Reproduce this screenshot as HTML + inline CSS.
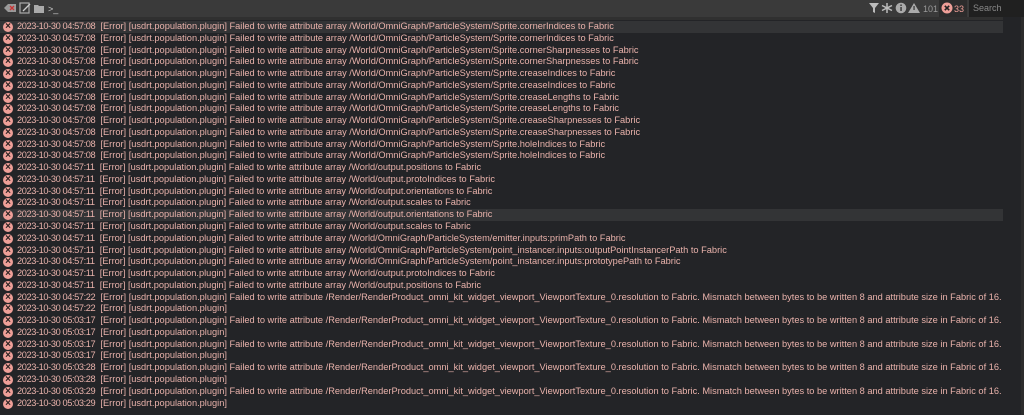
<!DOCTYPE html>
<html><head><style>
*{margin:0;padding:0;box-sizing:border-box}
body{width:1024px;height:415px;background:#232427;overflow:hidden;font-family:"Liberation Sans",sans-serif;position:relative}
#tb{position:absolute;left:0;top:0;width:1024px;height:17px;background:#3a3a3a}
#strip{position:absolute;left:0;top:17px;width:1003px;height:3px;background:#303030}
#rows{position:absolute;left:0;top:21px;width:1003px}
.r{height:11.78px;line-height:11.78px;font-size:9.25px;color:#e9b2ab;white-space:nowrap;position:relative;padding-left:17px}
.r b{font-weight:normal;letter-spacing:-0.4px}
.r.h{background:#333436}
.r::before{content:"×";position:absolute;left:3px;top:1px;width:10px;height:10px;border-radius:50%;background:#ef9f98;color:#2a2020;font-size:10px;line-height:10px;text-align:center;font-weight:bold}
#sb{position:absolute;left:1021px;top:17px;width:3px;height:398px;background:#2c2c2c}
</style></head><body>
<div id="tb">
<svg width="60" height="17" style="position:absolute;left:2px;top:0">
<path d="M2 8l4-4h8v8H6z" fill="#9a9a9a"/><path d="M8 6l4 4M12 6l-4 4" stroke="#c33" stroke-width="1.3"/>
<rect x="18" y="3" width="9" height="10" fill="none" stroke="#aaa" stroke-width="1.2"/><path d="M21 11l7-7" stroke="#ccc" stroke-width="1.3"/>
<path d="M32 5h4l1 1h5v7h-10z" fill="#aaa"/>
<text x="46" y="12" font-size="9" fill="#ccc" font-family="Liberation Sans">&gt;_</text>
</svg>
<svg width="101" height="17" style="position:absolute;left:868px;top:0">
<path d="M1 3h10l-4 5v5l-2-1v-4z" fill="#bbb"/>
<path d="M19 3v10M14 5.5l10 5M14 10.5l10-5" stroke="#bbb" stroke-width="1.5"/>
<circle cx="33" cy="8" r="5.3" fill="#aaa"/><rect x="32.3" y="7" width="1.5" height="4" fill="#3a3a3a"/><rect x="32.3" y="4.5" width="1.5" height="1.5" fill="#3a3a3a"/>
<path d="M46 3l6 10h-12z" fill="#aaa"/><rect x="45.4" y="6" width="1.3" height="4" fill="#3a3a3a"/>
<text x="55" y="12" font-size="9" fill="#999" font-family="Liberation Sans">101</text>
<rect x="71" y="0" width="28" height="17" fill="#2c2c2c"/>
<circle cx="79" cy="8" r="5.5" fill="#ef9f98"/><path d="M76.8 5.8l4.4 4.4M81.2 5.8l-4.4 4.4" stroke="#222" stroke-width="1.6"/>
<text x="86" y="12" font-size="9" fill="#ef9f98" font-family="Liberation Sans">33</text>
</svg>
<div style="position:absolute;left:969px;top:0;width:55px;height:17px;background:#202020;color:#888;font-size:9px;line-height:17px;padding-left:4px">Search</div>
</div>
<div id="strip"></div>
<div id="rows">
<div class="r h"><b>2023-10-30 04:57:08</b>&nbsp; [Error] [usdrt.population.plugin] Failed to write attribute array /World/OmniGraph/ParticleSystem/Sprite.cornerIndices to Fabric</div>
<div class="r"><b>2023-10-30 04:57:08</b>&nbsp; [Error] [usdrt.population.plugin] Failed to write attribute array /World/OmniGraph/ParticleSystem/Sprite.cornerIndices to Fabric</div>
<div class="r"><b>2023-10-30 04:57:08</b>&nbsp; [Error] [usdrt.population.plugin] Failed to write attribute array /World/OmniGraph/ParticleSystem/Sprite.cornerSharpnesses to Fabric</div>
<div class="r"><b>2023-10-30 04:57:08</b>&nbsp; [Error] [usdrt.population.plugin] Failed to write attribute array /World/OmniGraph/ParticleSystem/Sprite.cornerSharpnesses to Fabric</div>
<div class="r"><b>2023-10-30 04:57:08</b>&nbsp; [Error] [usdrt.population.plugin] Failed to write attribute array /World/OmniGraph/ParticleSystem/Sprite.creaseIndices to Fabric</div>
<div class="r"><b>2023-10-30 04:57:08</b>&nbsp; [Error] [usdrt.population.plugin] Failed to write attribute array /World/OmniGraph/ParticleSystem/Sprite.creaseIndices to Fabric</div>
<div class="r"><b>2023-10-30 04:57:08</b>&nbsp; [Error] [usdrt.population.plugin] Failed to write attribute array /World/OmniGraph/ParticleSystem/Sprite.creaseLengths to Fabric</div>
<div class="r"><b>2023-10-30 04:57:08</b>&nbsp; [Error] [usdrt.population.plugin] Failed to write attribute array /World/OmniGraph/ParticleSystem/Sprite.creaseLengths to Fabric</div>
<div class="r"><b>2023-10-30 04:57:08</b>&nbsp; [Error] [usdrt.population.plugin] Failed to write attribute array /World/OmniGraph/ParticleSystem/Sprite.creaseSharpnesses to Fabric</div>
<div class="r"><b>2023-10-30 04:57:08</b>&nbsp; [Error] [usdrt.population.plugin] Failed to write attribute array /World/OmniGraph/ParticleSystem/Sprite.creaseSharpnesses to Fabric</div>
<div class="r"><b>2023-10-30 04:57:08</b>&nbsp; [Error] [usdrt.population.plugin] Failed to write attribute array /World/OmniGraph/ParticleSystem/Sprite.holeIndices to Fabric</div>
<div class="r"><b>2023-10-30 04:57:08</b>&nbsp; [Error] [usdrt.population.plugin] Failed to write attribute array /World/OmniGraph/ParticleSystem/Sprite.holeIndices to Fabric</div>
<div class="r"><b>2023-10-30 04:57:11</b>&nbsp; [Error] [usdrt.population.plugin] Failed to write attribute array /World/output.positions to Fabric</div>
<div class="r"><b>2023-10-30 04:57:11</b>&nbsp; [Error] [usdrt.population.plugin] Failed to write attribute array /World/output.protoIndices to Fabric</div>
<div class="r"><b>2023-10-30 04:57:11</b>&nbsp; [Error] [usdrt.population.plugin] Failed to write attribute array /World/output.orientations to Fabric</div>
<div class="r"><b>2023-10-30 04:57:11</b>&nbsp; [Error] [usdrt.population.plugin] Failed to write attribute array /World/output.scales to Fabric</div>
<div class="r h"><b>2023-10-30 04:57:11</b>&nbsp; [Error] [usdrt.population.plugin] Failed to write attribute array /World/output.orientations to Fabric</div>
<div class="r"><b>2023-10-30 04:57:11</b>&nbsp; [Error] [usdrt.population.plugin] Failed to write attribute array /World/output.scales to Fabric</div>
<div class="r"><b>2023-10-30 04:57:11</b>&nbsp; [Error] [usdrt.population.plugin] Failed to write attribute array /World/OmniGraph/ParticleSystem/emitter.inputs:primPath to Fabric</div>
<div class="r"><b>2023-10-30 04:57:11</b>&nbsp; [Error] [usdrt.population.plugin] Failed to write attribute array /World/OmniGraph/ParticleSystem/point_instancer.inputs:outputPointInstancerPath to Fabric</div>
<div class="r"><b>2023-10-30 04:57:11</b>&nbsp; [Error] [usdrt.population.plugin] Failed to write attribute array /World/OmniGraph/ParticleSystem/point_instancer.inputs:prototypePath to Fabric</div>
<div class="r"><b>2023-10-30 04:57:11</b>&nbsp; [Error] [usdrt.population.plugin] Failed to write attribute array /World/output.protoIndices to Fabric</div>
<div class="r"><b>2023-10-30 04:57:11</b>&nbsp; [Error] [usdrt.population.plugin] Failed to write attribute array /World/output.positions to Fabric</div>
<div class="r"><b>2023-10-30 04:57:22</b>&nbsp; [Error] [usdrt.population.plugin] Failed to write attribute /Render/RenderProduct_omni_kit_widget_viewport_ViewportTexture_0.resolution to Fabric. Mismatch between bytes to be written 8 and attribute size in Fabric of 16.</div>
<div class="r"><b>2023-10-30 04:57:22</b>&nbsp; [Error] [usdrt.population.plugin]</div>
<div class="r"><b>2023-10-30 05:03:17</b>&nbsp; [Error] [usdrt.population.plugin] Failed to write attribute /Render/RenderProduct_omni_kit_widget_viewport_ViewportTexture_0.resolution to Fabric. Mismatch between bytes to be written 8 and attribute size in Fabric of 16.</div>
<div class="r"><b>2023-10-30 05:03:17</b>&nbsp; [Error] [usdrt.population.plugin]</div>
<div class="r"><b>2023-10-30 05:03:17</b>&nbsp; [Error] [usdrt.population.plugin] Failed to write attribute /Render/RenderProduct_omni_kit_widget_viewport_ViewportTexture_0.resolution to Fabric. Mismatch between bytes to be written 8 and attribute size in Fabric of 16.</div>
<div class="r"><b>2023-10-30 05:03:17</b>&nbsp; [Error] [usdrt.population.plugin]</div>
<div class="r"><b>2023-10-30 05:03:28</b>&nbsp; [Error] [usdrt.population.plugin] Failed to write attribute /Render/RenderProduct_omni_kit_widget_viewport_ViewportTexture_0.resolution to Fabric. Mismatch between bytes to be written 8 and attribute size in Fabric of 16.</div>
<div class="r"><b>2023-10-30 05:03:28</b>&nbsp; [Error] [usdrt.population.plugin]</div>
<div class="r"><b>2023-10-30 05:03:29</b>&nbsp; [Error] [usdrt.population.plugin] Failed to write attribute /Render/RenderProduct_omni_kit_widget_viewport_ViewportTexture_0.resolution to Fabric. Mismatch between bytes to be written 8 and attribute size in Fabric of 16.</div>
<div class="r"><b>2023-10-30 05:03:29</b>&nbsp; [Error] [usdrt.population.plugin]</div>
</div>
<div id="sb"></div>
</body></html>
